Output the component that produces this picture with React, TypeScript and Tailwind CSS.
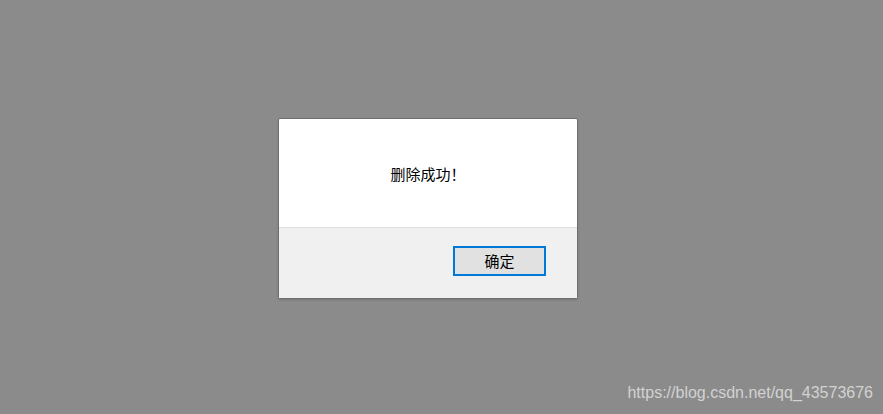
import React from 'react';

const App = () => {
  return (
    <div
      className="relative h-[414px] w-[883px] overflow-hidden bg-[#8b8b8b] pl-[278px] pt-[118px]"
      style={{ fontFamily: '"Noto Sans CJK SC", "Liberation Sans", sans-serif' }}
    >
      <div className="flex w-[300px] flex-col rounded-[2px] border border-[#6f6f6f] bg-white shadow-[0_1px_2px_rgba(0,0,0,0.15)]">
        <div className="flex h-[108px] items-center justify-center pt-[1px]">
          <span className="text-[15px] leading-none text-black">删除成功！</span>
        </div>
        <div className="flex h-[71px] justify-end border-t border-[#dfdfdf] bg-[#f0f0f0] pr-[31px] pt-[18px]">
          <button className="flex h-[30px] w-[93px] items-center justify-center border-2 border-[#0078d7] bg-[#e1e1e1] pb-[2px] text-[15px] leading-none text-black">
            确定
          </button>
        </div>
      </div>
      <div
        className="absolute bottom-[9px] right-[10px] text-[16px] text-[#d2d2d2]"
        style={{ fontFamily: '"Liberation Sans", Arial, sans-serif' }}
      >
        https://blog.csdn.net/qq_43573676
      </div>
    </div>
  );
};

export default App;
